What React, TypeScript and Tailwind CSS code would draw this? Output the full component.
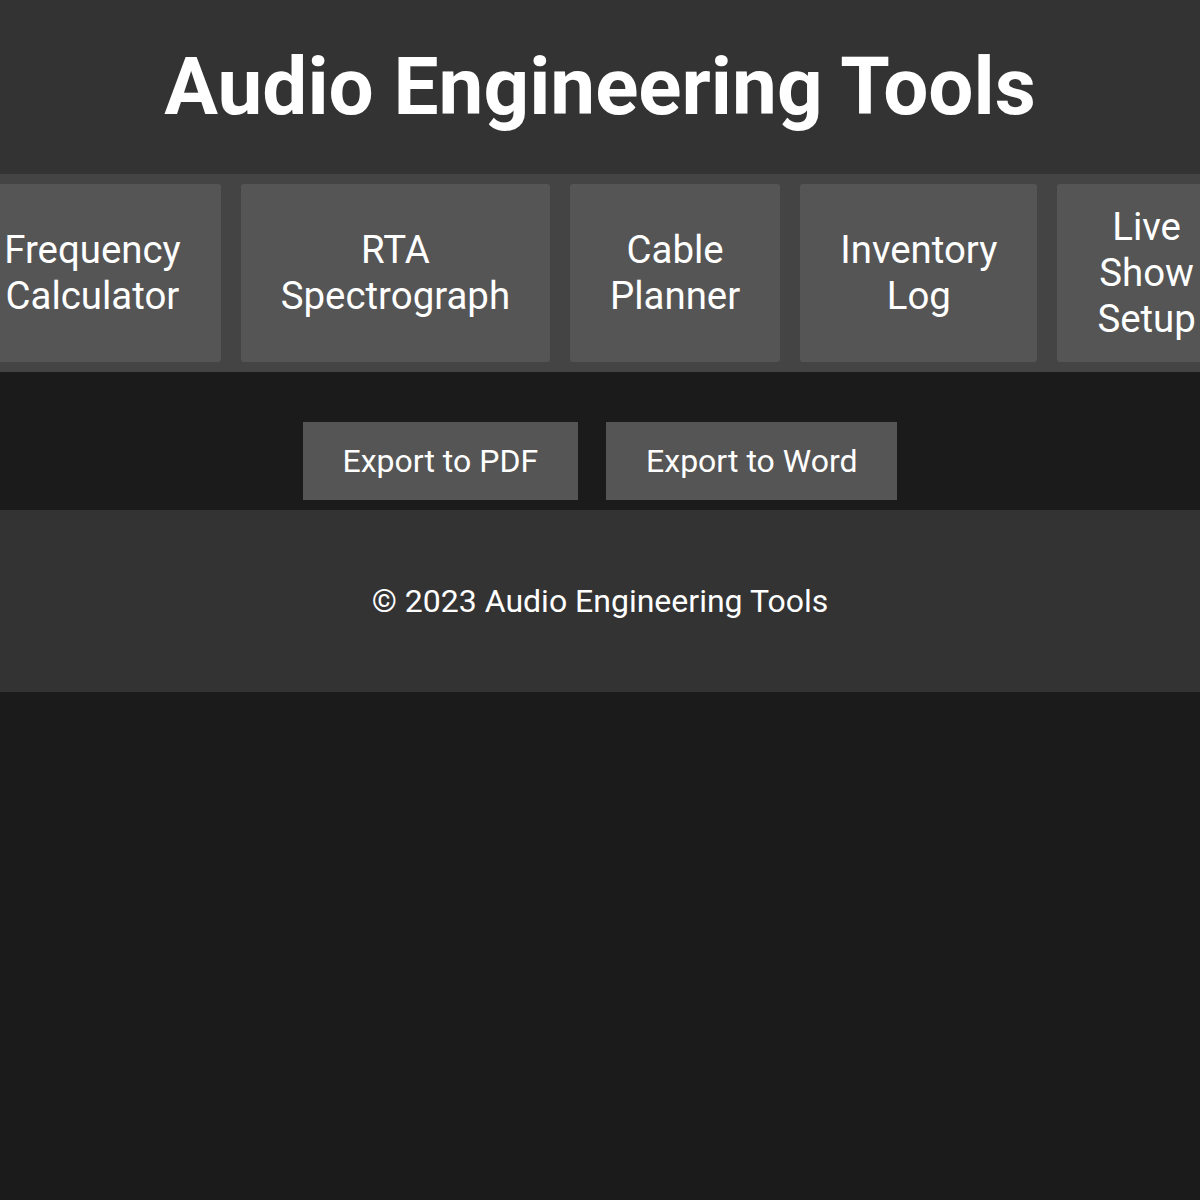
const tools = [
  "Frequency Calculator",
  "RTA Spectrograph",
  "Cable Planner",
  "Inventory Log",
  "Live Show Setup",
];

const App = () => {
  return (
    <div
      className="min-h-screen w-full bg-[#1b1b1b] text-white overflow-hidden"
      style={{ fontFamily: "Roboto, 'Noto Sans', sans-serif" }}
    >
      <header className="bg-[#333333] py-[40px] text-center">
        <h1 className="text-[80px] font-bold leading-[94px]">
          Audio Engineering Tools
        </h1>
      </header>

      <nav className="flex justify-center bg-[#444444] py-[10px]">
        {tools.map((tool) => (
          <div
            key={tool}
            className="mx-[10px] flex flex-shrink-0 w-min items-center justify-center rounded-[3px] bg-[#555555] px-[40px] py-[20px] text-center text-[38.4px] leading-[46px]"
          >
            {tool}
          </div>
        ))}
      </nav>

      <section className="flex justify-center gap-[28px] pt-[50px] pb-[10px]">
        <button className="bg-[#555555] px-[40px] py-[20px] text-[32px] leading-[38px]">
          Export to PDF
        </button>
        <button className="bg-[#555555] px-[40px] py-[20px] text-[32px] leading-[38px]">
          Export to Word
        </button>
      </section>

      <footer className="bg-[#333333] py-[72px] text-center text-[32px] leading-[38px]">
        © 2023 Audio Engineering Tools
      </footer>
    </div>
  );
};

export default App;
